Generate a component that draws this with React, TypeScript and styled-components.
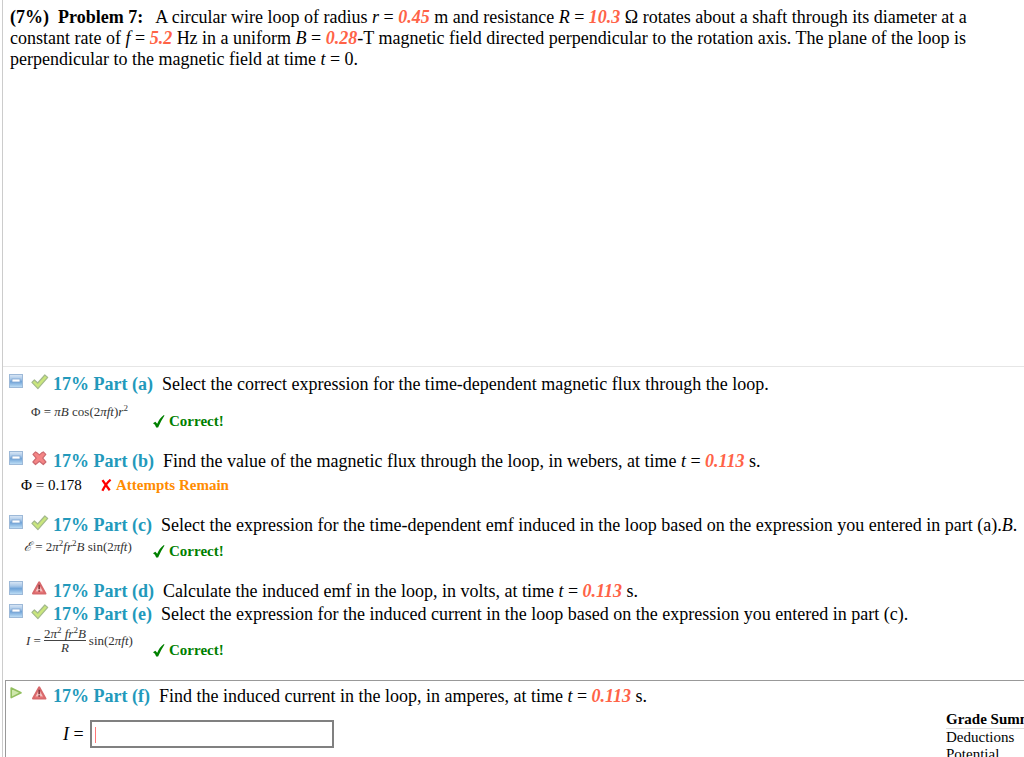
import React from "react";
import styled, { createGlobalStyle } from "styled-components";

const Global = createGlobalStyle`
  * { box-sizing: border-box; }
  html { scrollbar-width: none; }
  body {
    margin: 0;
    background: #fff;
    color: #000;
    font-family: "Liberation Serif", "Times New Roman", serif;
    font-size: 18px;
    line-height: 21px;
  }
`;

const Page = styled.main`
  margin-left: 2px;
  border-left: 1px solid #ccc;
  min-height: 100vh;
`;

const Statement = styled.header`
  min-height: 367px;
  margin-bottom: 7px;
  padding: 7px 40px 0 7px;
  border-bottom: 1px solid #e6e6e6;
`;

const Title = styled.strong`
  margin-right: 12px;
`;

const Value = styled.em`
  color: #ff6347;
  font-weight: bold;
`;

const Part = styled.section<{ $height: number }>`
  min-height: ${(p) => p.$height}px;
  padding-left: 6px;
`;

const PartHead = styled.div`
  display: flex;
  align-items: flex-start;
`;

const IconButton = styled.button`
  display: flex;
  flex: none;
  width: 14px;
  height: 14px;
  margin: 0 8px 0 0;
  padding: 0;
  border: 0;
  background: none;
`;

const Status = styled.span`
  display: flex;
  flex: none;
  width: 18px;
  height: 16px;
  margin-right: 4px;
`;

const PartTitle = styled.h2`
  flex: none;
  margin: 0 9px 0 0;
  color: #2299bb;
  font-size: 18px;
  line-height: 21px;
  white-space: nowrap;
`;

const Question = styled.p`
  margin: 0;
`;

const Answer = styled.div<{ $indent: number; $top: number }>`
  display: flex;
  align-items: flex-start;
  padding: ${(p) => p.$top}px 0 0 ${(p) => p.$indent}px;
  font-size: 15px;
  line-height: 18px;
`;

const Formula = styled.div<{ $width: number }>`
  display: flex;
  align-items: center;
  gap: 3px;
  width: ${(p) => p.$width}px;
  color: #333;
  font-size: 13px;
  line-height: 14px;
  white-space: nowrap;
  sup { font-size: 9px; line-height: 0; }
`;

const Fraction = styled.span`
  display: inline-flex;
  flex-direction: column;
  align-items: center;
  line-height: 13px;
`;

const Numerator = styled.span`
  border-bottom: 1px solid #444;
`;

const Verdict = styled.strong<{ $color: string; $top: number }>`
  display: flex;
  align-items: center;
  gap: 4px;
  margin-top: ${(p) => p.$top}px;
  color: ${(p) => p.$color};
  white-space: nowrap;
`;

const Numeric = styled.span`
  width: 80px;
`;

const ActivePart = styled.section`
  margin-left: 2px;
  padding: 5px 0 0 3px;
  border-top: 1px solid #999;
  border-left: 1px solid #999;
`;

const Workspace = styled.div`
  display: flex;
  justify-content: space-between;
  align-items: flex-start;
  padding: 13px 0 0 54px;
`;

const AnswerLabel = styled.label`
  display: flex;
  align-items: center;
  gap: 6px;
`;

const AnswerInput = styled.input`
  width: 244px;
  height: 28px;
  padding: 2px 4px;
  border: 2px solid #808080;
  border-radius: 0;
  outline: none;
  font: inherit;
  caret-color: #f66;
`;

const InputWrap = styled.span`
  position: relative;
  display: flex;
  &::after {
    content: "";
    position: absolute;
    left: 5px;
    top: 7px;
    width: 1px;
    height: 16px;
    background: #ff7777;
  }
`;

const Grades = styled.aside`
  width: 78px;
  margin-top: -10px;
  overflow: hidden;
  font-size: 15px;
  line-height: 17px;
  white-space: nowrap;
`;

const GradeTitle = styled.h3`
  margin: 0;
  border-bottom: 1px solid #ddd;
  font-size: 15px;
  line-height: 18px;
`;

const GradeRow = styled.div``;

const Toggle = ({ open = true }: { open?: boolean }) => (
  <IconButton type="button" aria-label={open ? "Collapse part" : "Expand part"}>
    <svg width="14" height="14" viewBox="0 0 14 14">
      <defs>
        <linearGradient id="blue" x2="0" y2="1">
          <stop stopColor="#dce8f6" />
          <stop offset=".35" stopColor="#a9c8e8" />
          <stop offset=".55" stopColor="#6fa3d8" />
          <stop offset="1" stopColor="#c4e2f7" />
        </linearGradient>
      </defs>
      <rect x=".5" y=".5" width="13" height="13" fill="url(#blue)" stroke="#9db9d8" />
      {open && <rect x="3" y="5" width="8" height="3" fill="#fff" stroke="#7fa6d2" strokeWidth=".8" />}
    </svg>
  </IconButton>
);

const Play = () => (
  <IconButton type="button" aria-label="Current part">
    <svg width="14" height="14" viewBox="0 0 14 14">
      <path d="M2.2 2 12 6.8 2.2 11.6Z" fill="#cfe7ad" stroke="#92bf5f" strokeWidth="1.6" strokeLinejoin="round" />
    </svg>
  </IconButton>
);

type Kind = "right" | "wrong" | "warning";

const StatusIcon = ({ kind }: { kind: Kind }) => (
  <Status>
    <svg width="18" height="16" viewBox="0 0 18 16" strokeLinejoin="round">
      {kind === "right" && (
        <path d="M.9 8.4 3.4 6 6.7 9 13.8 1 16.7 3.4 6.9 14.6Z" fill="#c9e67c" stroke="#a3b98c" strokeWidth="1.2" />
      )}
      {kind === "wrong" && (
        <path
          d="M2 3.4 4.5 .9 6.3 2.1 8.4 3.9 10.4 2.1 12.3 .9 14.8 3.4 11.7 7.1 14.9 11 12.3 13.5 8.4 10.3 4.5 13.5 1.9 11 5.2 7.1Z"
          fill="#f58585"
          stroke="#cc6a70"
          strokeWidth="1.2"
        />
      )}
      {kind === "warning" && (
        <>
          <path d="M8.2 1.3 14.4 12.6 2 12.6Z" fill="#f07f7f" stroke="#d8696c" strokeWidth="2" />
          <path d="M8.2 3.8 11.6 10.2 4.8 10.2Z" fill="#f2c4c4" />
          <path d="M8.2 3.8V8.2M8.2 9.2V10.8" stroke="#8a3a40" strokeWidth="1.8" />
        </>
      )}
    </svg>
  </Status>
);

const Correct = ({ top }: { top: number }) => (
  <Verdict $color="#008000" $top={top}>
    <svg width="12" height="13" viewBox="0 0 12 13">
      <path d="M0 8.3 2.4 6.8 4.2 8.8Q6.6 3 10.9 0L11.5.5Q8 5.8 5.1 12.5H3.2Q2.2 9.4 0 8.3Z" fill="#008000" />
    </svg>
    Correct!
  </Verdict>
);

const Cross = () => (
  <svg width="11" height="13" viewBox="0 0 11 13">
    <path d="M1.5 1.2Q4 5 8.7 11.2M9.6.7Q5 4.5 1.4 11.8" fill="none" stroke="#f00" strokeWidth="2.3" />
  </svg>
);

const Head = ({ letter, kind, current, open, children }: {
  letter: string;
  kind: Kind;
  current?: boolean;
  open?: boolean;
  children: React.ReactNode;
}) => (
  <PartHead>
    {current ? <Play /> : <Toggle open={open} />}
    <StatusIcon kind={kind} />
    <PartTitle>17% Part ({letter})</PartTitle>
    <Question>{children}</Question>
  </PartHead>
);

const Time = () => (
  <>
    at time <i>t</i> = <Value>0.113</Value> s.
  </>
);

export default function App() {
  return (
    <>
      <Global />
      <Page>
        <Statement>
          <Title>(7%)&nbsp; Problem 7:</Title>
          A circular wire loop of radius <i>r</i> = <Value>0.45</Value> m and resistance <i>R</i> ={" "}
          <Value>10.3</Value> Ω rotates about a shaft through its diameter at a constant rate of <i>f</i> ={" "}
          <Value>5.2</Value> Hz in a uniform <i>B</i> = <Value>0.28</Value>-T magnetic field directed perpendicular
          to the rotation axis. The plane of the loop is perpendicular to the magnetic field at time <i>t</i> = 0.
        </Statement>
        <Part $height={77}>
          <Head letter="a" kind="right">
            Select the correct expression for the time-dependent magnetic flux through the loop.
          </Head>
          <Answer $indent={22} $top={10}>
            <Formula $width={122}>
              <span>Φ = <i>πB</i> cos(2<i>πft</i>)<i>r</i><sup>2</sup></span>
            </Formula>
            <Correct top={7} />
          </Answer>
        </Part>
        <Part $height={64}>
          <Head letter="b" kind="wrong">
            Find the value of the magnetic flux through the loop, in webers, <Time />
          </Head>
          <Answer $indent={12} $top={4}>
            <Numeric>Φ = 0.178</Numeric>
            <Verdict $color="#ff8c00" $top={0}><Cross />Attempts Remain</Verdict>
          </Answer>
        </Part>
        <Part $height={66}>
          <Head letter="c" kind="right">
            Select the expression for the time-dependent emf induced in the loop based on the expression you entered
            in part (a).<i>B</i>.
          </Head>
          <Answer $indent={15} $top={4}>
            <Formula $width={129}>
              <span><i>ℰ</i> = 2<i>π</i><sup>2</sup><i>fr</i><sup>2</sup><i>B</i> sin(2<i>πft</i>)</span>
            </Formula>
            <Correct top={2} />
          </Answer>
        </Part>
        <Part $height={23}>
          <Head letter="d" kind="warning" open={false}>
            Calculate the induced emf in the loop, in volts, <Time />
          </Head>
        </Part>
        <Part $height={76}>
          <Head letter="e" kind="right">
            Select the expression for the induced current in the loop based on the expression you entered in part (c).
          </Head>
          <Answer $indent={17} $top={2}>
            <Formula $width={127}>
              <span><i>I</i> =</span>
              <Fraction>
                <Numerator>2<i>π</i><sup>2</sup> <i>fr</i><sup>2</sup><i>B</i></Numerator>
                <i>R</i>
              </Fraction>
              <span>sin(2<i>πft</i>)</span>
            </Formula>
            <Correct top={14} />
          </Answer>
        </Part>
        <ActivePart>
          <Head letter="f" kind="warning" current>
            Find the induced current in the loop, in amperes, <Time />
          </Head>
          <Workspace>
            <AnswerLabel>
              <span><i>I</i> =</span>
              <InputWrap><AnswerInput type="text" /></InputWrap>
            </AnswerLabel>
            <Grades>
              <GradeTitle>Grade Summary</GradeTitle>
              <GradeRow>Deductions</GradeRow>
              <GradeRow>Potential</GradeRow>
            </Grades>
          </Workspace>
        </ActivePart>
      </Page>
    </>
  );
}
